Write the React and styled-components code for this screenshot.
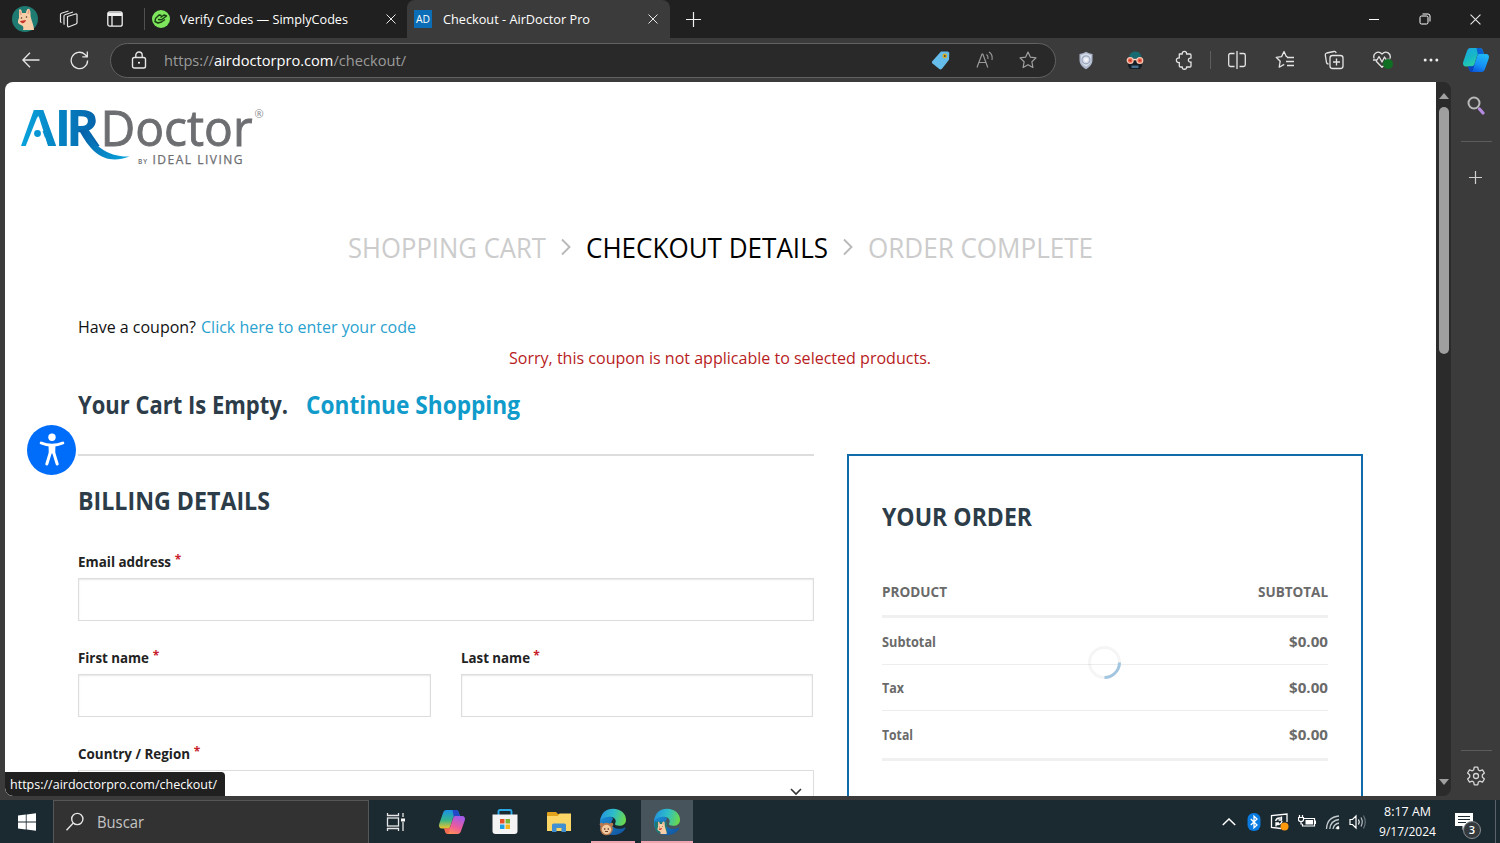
import React, { useLayoutEffect, useRef, useState } from "react";
import styled, { createGlobalStyle } from "styled-components";

const Fit = ({ w, children }) => {
  const ref = useRef(null);
  const [scale, setScale] = useState(1);

  useLayoutEffect(() => {
    setScale(w / ref.current.getBoundingClientRect().width);
  }, [w]);

  return (
    <FitBox $w={w}>
      <FitInner ref={ref} style={{ transform: `scaleX(${scale})` }}>
        {children}
      </FitInner>
    </FitBox>
  );
};

const CloseIcon = ({ size = 10 }) => (
  <Svg width={size} height={size} viewBox="0 0 10 10" stroke="#e8e8e8">
    <path d="M.5 .5l9 9M9.5 .5l-9 9" />
  </Svg>
);

const SearchGlass = () => (
  <Svg width="20" height="20" viewBox="0 0 20 20" stroke="#e6e6e6" strokeWidth="1.4">
    <circle cx="12.3" cy="7" r="5.6" />
    <path d="M8.3 11L1.5 18.3" />
  </Svg>
);

const CopilotIcon = ({ colorful }) => {
  const id = colorful ? "task" : "bar";
  return (
    <Svg width="28" height="26" viewBox="0 0 28 26">
      <defs>
        <linearGradient id={`${id}a`} x1="0" y1="0" x2={colorful ? "0" : ".6"} y2="1">
          <stop offset="0" stopColor={colorful ? "#1a8fe8" : "#1aa3e8"} />
          <stop offset=".55" stopColor={colorful ? "#35b58b" : "#16b9c4"} />
          <stop offset="1" stopColor={colorful ? "#f2c52c" : "#30d59a"} />
        </linearGradient>
        <linearGradient id={`${id}b`} x1=".6" y1="0" x2=".2" y2="1">
          <stop offset="0" stopColor={colorful ? "#a45be8" : "#1fb6f5"} />
          <stop offset=".55" stopColor={colorful ? "#ee5b9a" : "#1590f5"} />
          <stop offset="1" stopColor={colorful ? "#ff9652" : "#0a55d8"} />
        </linearGradient>
      </defs>
      <path d="M8.500 1h9c2 0 3 1.200 3.500 3l.8 3h-4c-2 0-2.500 1-3 2.500L12.500 17c-.7 2-1.700 2.500-3.500 2.500H4C1.500 19.500.5 17.500 1.200 15L5 4c.6-2 1.700-3 3.500-3z" fill={`url(#${id}a)`} />
      <path d="M14.500 1h3c2 0 3 1.200 3.500 3l.8 3h-4q-1.200 0-2 .8z" fill={colorful ? "#2148c7" : "#0a5fd2"} />
      <path d="M19.500 25h-9c-2 0-3-1.200-3.500-3l-.8-2.500H9c2 0 3-.7 3.500-2.500L15 9.500c.6-2 1.500-2.500 3.500-2.500H24c2.500 0 3.500 1.800 2.800 4.300L23 22c-.6 2-1.700 3-3.500 3z" fill={`url(#${id}b)`} />
      <path d="M6.200 19.500H9c2 0 3-.7 3.500-2.500l-1.500 6-.8 2c-2 0-2.700-1.200-3.200-3z" fill={colorful ? "#f26a4f" : "#0b46bd"} />
    </Svg>
  );
};

const LlamaShape = () => (
  <>
    <path d="M7 4c1-2 3 0 3 3l4 0c0-3 2.500-6 4-3 1 3 0 5 1 8 1 4 3 8 3 12H11c1-3 0-4-2-5-3-1-4-3-2-7z" fill="#f6cfa8" />
    <path d="M8 5l1 4M17 4l-1 4" stroke="#e8a08c" strokeWidth="1.500" />
    <path d="M8 15c1 3 5 3 6-1z" fill="#c7342c" />
    <circle cx="9.500" cy="12" r=".8" fill="#5a3020" />
    <circle cx="14.500" cy="11" r=".8" fill="#5a3020" />
  </>
);

const AvatarIcon = () => (
  <Svg width="26" height="26" viewBox="0 0 26 26">
    <circle cx="13" cy="13" r="13" fill="#1f7a72" />
    <LlamaShape />
  </Svg>
);

const EdgeIcon = ({ llama }) => {
  const id = llama ? "edgeL" : "edgeM";
  return (
    <Svg width="28" height="28" viewBox="0 0 28 28">
      <defs>
        <linearGradient id={`${id}a`} x1="0" y1=".3" x2="1" y2=".5">
          <stop offset="0" stopColor="#2493df" />
          <stop offset=".5" stopColor="#2dbdc8" />
          <stop offset="1" stopColor="#6ad94c" />
        </linearGradient>
        <linearGradient id={`${id}b`} x1="0" y1="0" x2="1" y2="1">
          <stop offset="0" stopColor="#1b8ed8" />
          <stop offset="1" stopColor="#12509a" />
        </linearGradient>
      </defs>
      <path d="M1 13c-1 8 4 14 13 14 6 0 10-2.500 12.300-6.500.4-.8-.3-1.200-1-.8-6 2.800-12.800.3-13-4.700 0-2.500 2-4 2-4C11 6 2 7 1 13z" fill={`url(#${id}b)`} />
      <path d="M1 13C2 5 7 .8 14 .8c8 0 13 5.200 13 11 0 4-3 6-6.500 6-3 0-5-1-4.500-2 2-3 0-7-5-7-4 0-8 1-10 4.200z" fill={`url(#${id}a)`} />
      {llama ? (
        <g transform="translate(1 12) scale(.58)">
          <path d="M1 3h21v20H10C4 22 1 16 1 3z" fill="#1f7a72" />
          <LlamaShape />
        </g>
      ) : (
        <>
          <circle cx="7.500" cy="21" r="6.300" fill="#b9794f" />
          <circle cx="7.500" cy="21.500" r="4.700" fill="#f3c9a0" />
          <circle cx="2.500" cy="16.500" r="1.800" fill="#b9794f" />
          <circle cx="12.500" cy="16.500" r="1.800" fill="#b9794f" />
          <circle cx="5.700" cy="21" r=".8" fill="#4a2a1c" />
          <circle cx="9.300" cy="21" r=".8" fill="#4a2a1c" />
          <path d="M6 23.500h3" stroke="#6b3c28" />
        </>
      )}
    </Svg>
  );
};

const Logo = () => (
  <LogoSvg width="246" height="62" viewBox="0 0 246 62">
    <defs>
      <linearGradient id="air" gradientUnits="userSpaceOnUse" x1="0" y1="0" x2="80" y2="0">
        <stop offset="0" stopColor="#08a3dc" />
        <stop offset="1" stopColor="#0560a8" />
      </linearGradient>
      <linearGradient id="swoosh" gradientUnits="userSpaceOnUse" x1="60" y1="26" x2="110" y2="50">
        <stop offset="0" stopColor="#0560a8" />
        <stop offset="1" stopColor="#08a8df" />
      </linearGradient>
    </defs>
    <text x="0 33.500 45" y="38.700" fontFamily="Open Sans" fontWeight="700" fontSize="51" fill="url(#air)">
      AIR
    </text>
    <path d="M4.500 39.500L16.500 9.500l10.500 30z" fill="#fff" />
    <circle cx="16.500" cy="26.500" r="3.400" fill="#0897d4" />
    <path d="M58 23h8c7 15 19 27 42.500 26.500C86 58 71 48 58 23z" fill="url(#swoosh)" />
    <text x="79.500" y="38.500" fontFamily="Open Sans" fontSize="50" fill="#6d6e71" stroke="#6d6e71" strokeWidth=".9" textLength="152" lengthAdjust="spacingAndGlyphs">
      Doctor
    </text>
    <text x="233.500" y="11" fontFamily="Open Sans" fontSize="11" fill="#8a8b8d">
      ®
    </text>
    <text x="117" y="56.500" fontFamily="Open Sans" fontWeight="600" fontSize="6.500" fill="#6d6e71" textLength="9">
      BY
    </text>
    <text x="131.500" y="56.500" fontFamily="Open Sans" fontSize="12" fill="#6d6e71" stroke="#6d6e71" strokeWidth=".25" textLength="90">
      IDEAL LIVING
    </text>
  </LogoSvg>
);

const TabStrip = () => (
  <TabBar>
    <TabBarTools>
      <AvatarIcon />
      <Svg width="20" height="18" viewBox="0 0 20 18" stroke="#e6e6e6" strokeWidth="1.200">
        <path d="M8.500 6.500l8-2.500q1.500-.3 1.500 1v7.500q0 1-1 1.500l-7 2.700q-1.500.4-1.500-1z" />
        <path d="M5.500 14.500L5 14V6q0-1 1-1.300L14 2M2.500 12.500L1.500 12V4.500q0-1 1-1.300L9.500 1" />
      </Svg>
      <Svg width="16" height="16" viewBox="0 0 16 16" stroke="#f0f0f0" strokeWidth="1.300">
        <rect x=".8" y=".8" width="14.400" height="14.400" rx="2" />
        <path d="M1 2.500h14M1 4h14" strokeWidth="2" />
        <path d="M5 4v11" />
      </Svg>
    </TabBarTools>
    <TabSeparator />
    <Tab $width={261}>
      <Svg width="18" height="18" viewBox="0 0 18 18">
        <circle cx="9" cy="9" r="9" fill="#7ee65c" />
        <path d="M9.500 5.500L7 5 3.500 8.500l-.5 3L6 13l3.500-1 3.500-2.500M6 9.500l3.500.3L14.500 6 12 5l-3.500 2.500" stroke="#173c12" strokeWidth="1.400" strokeLinejoin="round" />
      </Svg>
      <TabTitle><Fit w={168}>Verify Codes — SimplyCodes</Fit></TabTitle>
      <CloseIcon />
    </Tab>
    <Tab $width={263} $active>
      <SiteMark><Fit w={14}>AD</Fit></SiteMark>
      <TabTitle><Fit w={147}>Checkout - AirDoctor Pro</Fit></TabTitle>
      <CloseIcon />
    </Tab>
    <NewTab>
      <Svg width="15" height="15" viewBox="0 0 15 15" stroke="#f0f0f0" strokeWidth="1.200">
        <path d="M7.500 0v15M0 7.500h15" />
      </Svg>
    </NewTab>
    <WindowControls>
      <Svg width="10" height="10" viewBox="0 0 10 10" stroke="#fff"><path d="M0 5.500h10" /></Svg>
      <Svg width="12" height="12" viewBox="0 0 12 12" stroke="#fff">
        <rect x="1" y="3" width="8" height="8" rx="1.500" />
        <path d="M3.500 1H9q2 0 2 2v5.500" />
      </Svg>
      <CloseIcon size={11} />
    </WindowControls>
  </TabBar>
);

const Toolbar = () => (
  <ToolbarRow>
    <NavButtons>
      <Svg width="18" height="16" viewBox="0 0 18 16" stroke="#e6e6e6" strokeWidth="1.300">
        <path d="M17.500 8H1M8 .8L.9 8 8 15.200" />
      </Svg>
      <Svg width="19" height="19" viewBox="0 0 19 19" stroke="#e6e6e6" strokeWidth="1.300">
        <path d="M17.600 9.500a8.200 8.200 0 1 1-2.600-6L17 5.500M17.300.6v5.200h-5" />
      </Svg>
    </NavButtons>
    <AddressBar>
      <Svg width="16" height="18" viewBox="0 0 16 18" stroke="#e6e6e6" strokeWidth="1.400">
        <rect x="1.500" y="6.500" width="13" height="10.500" rx="1.800" />
        <path d="M4.800 6.500V4.200a3.200 3.200 0 0 1 6.400 0v2.300" />
        <circle cx="8" cy="11.800" r="1" fill="#fff" stroke="none" />
      </Svg>
      <Url>
        <Fit w={242}>https://<b>airdoctorpro.com</b>/checkout/</Fit>
      </Url>
      <AddressIcons>
        <Svg width="20" height="19" viewBox="0 0 20 19">
          <path d="M10 .6h7l1.300 1.200-.3 7L11 17.800q-1.500 1.200-3 0L1.500 12.500Q.5 11.500 1.300 10.300z" fill="#64bdea" />
          <circle cx="13.800" cy="5" r="2.400" fill="#dcae28" />
          <circle cx="13.800" cy="5" r="1" fill="#3a4a52" />
        </Svg>
        <Svg width="18" height="18" viewBox="0 0 18 18" stroke="#999" strokeWidth="1.200">
          <path d="M1 16.500L6 3h.8l5 13.500M3 11.500h7M10.500 3.500q2 1.500 1.500 4.500M13 1q4 2.500 3 8" />
        </Svg>
        <Svg width="18" height="18" viewBox="0 0 18 18" stroke="#a0a0a0" strokeWidth="1.200">
          <path d="M9 1l2.400 5.200 5.600.7-4.100 3.900 1 5.700L9 13.700l-4.900 2.800 1-5.700L1 6.900l5.600-.7z" strokeLinejoin="round" />
        </Svg>
      </AddressIcons>
    </AddressBar>
    <Extensions>
      <Svg width="18" height="19" viewBox="0 0 18 19">
        <path d="M9 .8Q12 2.500 15.500 3v6c0 4-3 7.500-6.500 9.200C5.500 16.500 2.500 13 2.500 9V3Q6 2.500 9 .8z" fill="#aeb8cc" />
        <path d="M9 2.500l5 1.800V9c0 3-2 5-5 6.700C6 14 4 12 4 9V4.300z" fill="#d8deea" />
        <circle cx="9" cy="8.800" r="4" stroke="#9aa5bb" strokeWidth="1.200" />
        <circle cx="9" cy="8.800" r="2" fill="#f2f4fa" />
      </Svg>
      <Svg width="18" height="18" viewBox="0 0 18 18">
        <path d="M3 7.500C3 3 5.500.5 9.500.5S15.500 3.500 15.500 7.500z" fill="#176b70" />
        <path d="M2 10h14v5l-2 3H4l-2-3z" fill="#151d25" />
        <path d="M5.500 14.500h7v2.500h-7z" fill="#456f8e" />
        <path d="M7 8.500h4" stroke="#f0d8cc" strokeWidth="1.400" />
        <circle cx="4.200" cy="9.500" r="2.900" fill="#ea5a40" stroke="#f5c5b4" strokeWidth="1.300" />
        <circle cx="13.800" cy="9.500" r="2.900" fill="#ea5a40" stroke="#f5c5b4" strokeWidth="1.300" />
        <circle cx="4.200" cy="9.500" r=".8" fill="#a32c20" />
        <circle cx="13.800" cy="9.500" r=".8" fill="#a32c20" />
      </Svg>
      <Svg width="18" height="20" viewBox="0 0 18 20" stroke="#e4e4e4" strokeWidth="1.300" strokeLinejoin="round">
        <path d="M4.300 4h3c-.8-3.600 5-3.600 4.200 0H15q1 0 1 1v3.200c-3.500-.8-3.500 4.600 0 3.800V16q0 1-1 1h-3.500c.8 3-5 3-4.200 0H5.300q-1 0-1-1v-3.500C.4 13 .4 7.500 4.300 8z" />
      </Svg>
    </Extensions>
    <ToolDivider />
    <ToolIcons>
      <Svg width="20" height="20" viewBox="0 0 20 20" stroke="#e4e4e4" strokeWidth="1.300">
        <path d="M7.500 3.500h-4q-1.800 0-1.800 1.800v9.400q0 1.800 1.800 1.800h4M12.500 3.500h4q1.800 0 1.800 1.800v9.400q0 1.800-1.800 1.800h-4M10 1v18" />
      </Svg>
      <Svg width="20" height="20" viewBox="0 0 20 20" stroke="#e4e4e4" strokeWidth="1.300">
        <path d="M12.500 6.700L11.300 6.500 9 1.500 6.600 6.600 1.200 7.300l4 3.900-1 6 5-2.800M12 7.500h7M11 11.500h8M12 15.500h7" strokeLinejoin="round" />
      </Svg>
      <Svg width="20" height="20" viewBox="0 0 20 20" stroke="#e4e4e4" strokeWidth="1.300">
        <path d="M4.500 14Q2.800 14 2.500 12.500L1.300 5.200Q1 3.500 2.700 3l7.200-1.500q1.700-.3 2.300 1.500" />
        <rect x="6" y="5.500" width="13" height="13" rx="2.500" />
        <path d="M12.500 8.500v7M9 12h7" />
      </Svg>
      <Svg width="22" height="20" viewBox="0 0 22 20" stroke="#e4e4e4" strokeWidth="1.300">
        <path d="M2.200 8.500C.3 4 5.800-.3 10 4c4.200-4.300 9.500-.2 8 4.500M4 11l6 6.300 1.500-1.500M1 10h4l2-3.500L10 12l2.500-5 1.500 2.500h4" strokeLinejoin="round" />
        <circle cx="16" cy="14" r="5" fill="#0f7024" stroke="none" />
      </Svg>
      <Svg width="16" height="4" viewBox="0 0 16 4">
        <circle cx="2.200" cy="2" r="1.500" fill="#eee" />
        <circle cx="8" cy="2" r="1.500" fill="#eee" />
        <circle cx="13.800" cy="2" r="1.500" fill="#eee" />
      </Svg>
    </ToolIcons>
    <CopilotSlot><CopilotIcon /></CopilotSlot>
  </ToolbarRow>
);

const Field = ({ label, labelWidth }) => (
  <FieldBox>
    <Label><Fit w={labelWidth}>{label}</Fit> <i>*</i></Label>
    <Input />
  </FieldBox>
);

const totals = [
  { label: "Subtotal", w: 54 },
  { label: "Tax", w: 22 },
  { label: "Total", w: 31 },
];

const Crumb = () => (
  <Svg width="12" height="18" viewBox="0 0 12 18" stroke="#b9b9b9" strokeWidth="1.900">
    <path d="M2 1.500L9.500 9 2 16.500" />
  </Svg>
);

const CheckoutPage = () => (
  <Page>
    <PageHeader><Logo /></PageHeader>
    <Steps>
      <Step><Fit w={198}>SHOPPING CART</Fit></Step>
      <Crumb />
      <Step $current><Fit w={242}>CHECKOUT DETAILS</Fit></Step>
      <Crumb />
      <Step><Fit w={225}>ORDER COMPLETE</Fit></Step>
    </Steps>
    <Coupon>
      <Fit w={118}>Have a coupon?</Fit>
      <a><Fit w={215}>Click here to enter your code</Fit></a>
    </Coupon>
    <CouponError><Fit w={422}>Sorry, this coupon is not applicable to selected products.</Fit></CouponError>
    <EmptyCart>
      <Fit w={210}>Your Cart Is Empty.</Fit>
      <a><Fit w={214}>Continue Shopping</Fit></a>
    </EmptyCart>
    <Columns>
      <Billing>
        <BillingTitle><Fit w={192}>BILLING DETAILS</Fit></BillingTitle>
        <Field label="Email address" labelWidth={93} />
        <FieldRow>
          <Field label="First name" labelWidth={71} />
          <Field label="Last name" labelWidth={69} />
        </FieldRow>
        <FieldBox>
          <Label><Fit w={112}>Country / Region</Fit> <i>*</i></Label>
          <Select>
            <Svg width="12" height="8" viewBox="0 0 12 8" stroke="#333" strokeWidth="1.600">
              <path d="M1 1l5 5 5-5" />
            </Svg>
          </Select>
        </FieldBox>
      </Billing>
      <Order>
        <OrderTitle><Fit w={150}>YOUR ORDER</Fit></OrderTitle>
        <OrderHead><Fit w={65}>PRODUCT</Fit><Fit w={70}>SUBTOTAL</Fit></OrderHead>
        {totals.map((row) => (
          <OrderRow key={row.label}>
            <Fit w={row.w}>{row.label}</Fit>
            <Fit w={39}>$0.00</Fit>
          </OrderRow>
        ))}
        <Spinner />
      </Order>
    </Columns>
    <AccessButton>
      <Svg width="28" height="34" viewBox="0 0 28 34">
        <circle cx="14" cy="4.200" r="3.700" fill="#fff" />
        <path d="M3.200 10q5 2.200 10.800 2.200T24.800 10M12.200 20l-3.400 11M15.800 20l3.400 11" stroke="#fff" strokeWidth="3" strokeLinecap="round" />
        <path d="M10.500 11h7l-.3 9.500h-6.400z" fill="#fff" />
      </Svg>
    </AccessButton>
    <StatusUrl><Fit w={207}>https://airdoctorpro.com/checkout/</Fit></StatusUrl>
  </Page>
);

const Sidebar = () => (
  <Side>
    <Svg width="18" height="19" viewBox="0 0 18 19">
      <circle cx="7" cy="7" r="5.500" stroke="#b9b9b9" strokeWidth="2" />
      <path d="M12.500 13l3.500 4" stroke="#b58be0" strokeWidth="3.200" strokeLinecap="round" />
    </Svg>
    <SideRule />
    <Svg width="13" height="13" viewBox="0 0 13 13" stroke="#d0d0d0" strokeWidth="1.200"><path d="M6.500 0v13M0 6.500h13" /></Svg>
    <SideSpace />
    <SideRule />
    <Svg width="20" height="20" viewBox="0 0 20 20" stroke="#d6d6d6" strokeWidth="1.300" strokeLinejoin="round">
      <path d="M8.300 1.200h3.400l.7 2.800 1.300.8 2.800-.9 1.900 3.100-2.100 2v2l2.100 2-1.900 3.100-2.800-.9-1.300.8-.7 2.800H8.300L7.600 16l-1.300-.8-2.800.9L1.600 13l2.100-2V9L1.600 7l1.900-3.100 2.800.9L7.600 4z" />
      <circle cx="10" cy="10" r="2.500" />
    </Svg>
  </Side>
);

const Taskbar = () => (
  <TaskRow>
    <StartButton>
      <Svg width="18" height="18" viewBox="0 0 18 18">
        <path d="M0 2.600l7.800-1v7H0zM8.600 1.400L18 .2v8.400H8.600zM0 9.400h7.800v7L0 15.400zM8.600 9.400H18v8.400l-9.400-1.200z" fill="#fff" />
      </Svg>
    </StartButton>
    <SearchBox>
      <SearchGlass />
      <Fit w={47}>Buscar</Fit>
    </SearchBox>
    <TaskItem>
      <Svg width="20" height="18" viewBox="0 0 20 18" stroke="#e6e6e6" strokeWidth="1.300">
        <path d="M1.500 0v2.500h11V0M1.500 18v-2.500h11V18M17 0v4M17 9v9" />
        <rect x="1.500" y="5" width="11" height="8" />
        <path d="M15 5.500h4v3h-4z" fill="#fff" stroke="none" />
      </Svg>
    </TaskItem>
    <TaskItem $nudge={3}><CopilotIcon colorful /></TaskItem>
    <TaskItem $nudge={2}>
      <Svg width="26" height="26" viewBox="0 0 26 26">
        <path d="M6.500 6V2.500q0-1.500 1.500-1.500h10q1.500 0 1.500 1.500V6" stroke="#2ba8e6" strokeWidth="1.900" />
        <path d="M.5 5.500h25V22q0 3-3 3h-19q-3 0-3-3z" fill="#f4f4f4" />
        <path d="M8 10h4.500v4.500H8z" fill="#e8502c" />
        <path d="M13.500 10H18v4.500h-4.500z" fill="#7fb432" />
        <path d="M8 15.500h4.500V20H8z" fill="#1f9fe3" />
        <path d="M13.500 15.500H18V20h-4.500z" fill="#f5b51c" />
      </Svg>
    </TaskItem>
    <TaskItem>
      <Svg width="24" height="20" viewBox="0 0 24 20">
        <path d="M0 1q0-1 1-1h8l2 2h12q1 0 1 1v16H0z" fill="#e3a21b" />
        <path d="M0 4h11l1.500-2.500H24V19H0z" fill="#fbd667" />
        <path d="M5 20v-7q0-1.500 1.500-1.500h11q1.500 0 1.500 1.500v7h-4.500v-4h-5v4z" fill="#3f8fd2" />
      </Svg>
    </TaskItem>
    <TaskItem $open><EdgeIcon /></TaskItem>
    <TaskItem $open $active><EdgeIcon llama /></TaskItem>
    <Tray>
      <Svg width="14" height="8" viewBox="0 0 14 8" stroke="#fff" strokeWidth="1.500"><path d="M.8 7L7 1l6.200 6" /></Svg>
      <Svg width="14" height="18" viewBox="0 0 14 18">
        <rect x=".5" width="13" height="18" rx="6" fill="#0a7be0" />
        <path d="M3.800 6l6.200 6-3 2.800V3.200L10 6l-6.200 6" stroke="#fff" strokeWidth="1.300" />
      </Svg>
      <Svg width="20" height="18" viewBox="0 0 20 18" stroke="#fff" strokeWidth="1.300">
        <path d="M17 9V1L1.500 2.500v12L11 15.500M5.500 8q1-3 4-3h2M11.500 3.500V7h-3M12 8q-.5 3-3.500 3.500h-2M6 13.500V10h3" />
        <circle cx="14.500" cy="13.500" r="4" fill="#ff9a0d" stroke="none" />
      </Svg>
      <Svg width="18" height="14" viewBox="0 0 18 14" stroke="#fff" strokeWidth="1.200">
        <path d="M6 3.500h10.500v7.500H4.500V9M17.500 5.500v3.500M1.500 0v2.500M4.500 0v2.500M.5 2.500h5v2Q5.500 6.500 3 6.500T.5 4.500zM3 6.500V9h1.500" />
        <path d="M7.500 5h7.500v4.500H7.500z" fill="#fff" stroke="none" />
      </Svg>
      <Svg width="16" height="16" viewBox="0 0 16 16" stroke="#c3cacd" strokeWidth="1.300">
        <path d="M1.500 15Q2 3 14 2M4.800 15Q5.500 6.500 14 5.500M8 15q.8-5 6-6M11 15q.5-2 3-3" />
        <circle cx="13" cy="14" r="1.400" fill="#fff" stroke="none" />
      </Svg>
      <Svg width="18" height="16" viewBox="0 0 18 16" stroke="#fff" strokeWidth="1.200">
        <path d="M1 5.500h2.500L7 2v12l-3.500-3.500H1zM9.500 5.500q1.500 2.500 0 5" />
        <path d="M12 3.500q2.500 4.500 0 9" stroke="#bcc2c5" />
        <path d="M14.500 1.500q3.500 6.500 0 13" stroke="#66737a" />
      </Svg>
    </Tray>
    <Clock>
      <Fit w={47}>8:17 AM</Fit>
      <Fit w={57}>9/17/2024</Fit>
    </Clock>
    <Notifications>
      <Svg width="18" height="18" viewBox="0 0 18 18">
        <path d="M0 0h18v13h-7l-3.500 4v-4H0z" fill="#fff" />
        <path d="M3 3.500h12M3 6.500h12M3 9.500h8" stroke="#1c2a32" strokeWidth="1.100" />
      </Svg>
      <Badge>3</Badge>
    </Notifications>
    <DesktopEdge />
  </TaskRow>
);

const App = () => (
  <Screen>
    <GlobalStyle />
    <TabStrip />
    <Toolbar />
    <Middle>
      <CheckoutPage />
      <Scrollbar>
        <Svg width="10" height="6" viewBox="0 0 10 6"><path d="M5 0l5 6H0z" fill="#a0a0a0" /></Svg>
        <Thumb />
        <Svg width="10" height="6" viewBox="0 0 10 6"><path d="M5 6L0 0h10z" fill="#a0a0a0" /></Svg>
      </Scrollbar>
      <Sidebar />
    </Middle>
    <Taskbar />
  </Screen>
);

export default App;

const GlobalStyle = createGlobalStyle`
  * {
    box-sizing: border-box;
  }
  body {
    margin: 0;
    overflow: hidden;
    font-family: "Open Sans", "Noto Sans", sans-serif;
  }
`;

const Screen = styled.div`
  display: flex;
  flex-direction: column;
  width: 1500px;
  height: 843px;
  background-color: #3b3b3b;
  overflow: hidden;
`;

const Svg = styled.svg`
  display: block;
  flex: none;
  fill: none;
`;

const FitBox = styled.span`
  display: inline-block;
  flex: none;
  width: ${(props) => props.$w}px;
  white-space: nowrap;
  vertical-align: top;
`;
const FitInner = styled.span`
  display: inline-block;
  transform-origin: left;
`;

const TabBar = styled.div`
  display: flex;
  align-items: center;
  height: 38px;
  background-color: #202020;
`;
const TabBarTools = styled.div`
  display: flex;
  align-items: center;
  width: 144px;
  padding-left: 12px;

  svg:nth-child(2) {
    margin: 0 28px 0 21px;
  }
`;
const TabSeparator = styled.div`
  width: 1px;
  height: 22px;
  margin-right: 1px;
  background-color: #505050;
`;
const Tab = styled.div`
  display: flex;
  align-items: center;
  width: ${(props) => props.$width}px;
  height: 38px;
  padding: 0 ${(props) => (props.$active ? 12 : 11)}px 0 ${(props) => (props.$active ? 7 : 6)}px;
  border-radius: 8px 8px 0 0;
  background-color: ${(props) => (props.$active ? "#3b3b3b" : "transparent")};
`;
const TabTitle = styled.div`
  flex: 1;
  margin-left: 10px;
  padding-top: 1px;
  font-size: 12.5px;
  line-height: 18px;
  color: #fff;
`;
const SiteMark = styled.div`
  width: 18px;
  height: 18px;
  padding-left: 2px;
  margin-right: 1px;
  font-size: 10px;
  line-height: 18px;
  color: #fff;
  background-color: #0b6db5;
`;
const NewTab = styled.div`
  margin-left: 16px;
`;
const WindowControls = styled.div`
  display: flex;
  align-items: center;
  justify-content: space-between;
  width: 112px;
  margin-left: auto;
  margin-right: 19px;
`;

const ToolbarRow = styled.div`
  display: flex;
  align-items: center;
  height: 44px;
  background-color: #3b3b3b;
`;
const NavButtons = styled.div`
  display: flex;
  align-items: center;
  gap: 30px;
  width: 110px;
  padding-left: 22px;
`;
const AddressBar = styled.div`
  display: flex;
  align-items: center;
  width: 946px;
  height: 35px;
  padding: 0 18px 0 20px;
  border: 1px solid #626262;
  border-radius: 18px;
  background-color: #292929;
`;
const Url = styled.div`
  margin-left: 17px;
  font-size: 15px;
  line-height: 20px;
  color: #9b9b9b;

  b {
    font-weight: 400;
    color: #fff;
  }
`;
const AddressIcons = styled.div`
  display: flex;
  align-items: center;
  gap: 25px;
  margin-left: auto;
`;
const Extensions = styled.div`
  display: flex;
  align-items: center;
  gap: 31px;
  margin-left: 21px;
`;
const ToolDivider = styled.div`
  width: 1px;
  height: 18px;
  margin: 0 16px 0 17px;
  background-color: #5e5e5e;
`;
const ToolIcons = styled.div`
  display: flex;
  align-items: center;
  gap: 28.4px;
`;
const CopilotSlot = styled.div`
  margin-left: auto;
  margin-right: 10px;
`;

const Middle = styled.div`
  display: flex;
  height: 718px;
  padding: 0 0 4px 5px;
`;
const Page = styled.main`
  position: relative;
  display: flex;
  flex-direction: column;
  width: 1431px;
  height: 714px;
  border-radius: 8px 0 0 8px;
  background-color: #fff;
  overflow: hidden;
`;
const PageHeader = styled.header`
  flex: none;
  height: 141px;
  padding: 25px 0 0 16px;
`;
const LogoSvg = styled(Svg)`
  overflow: visible;
`;
const Steps = styled.nav`
  display: flex;
  flex: none;
  align-items: center;
  justify-content: center;
  height: 48px;
  gap: 14px;
`;
const Step = styled.div`
  font-size: 28px;
  line-height: 40px;
  color: ${(props) => (props.$current ? "#000" : "#ccc")};
`;
const Coupon = styled.div`
  display: flex;
  gap: 5px;
  margin-top: 44px;
  padding-left: 73px;
  font-size: 16px;
  line-height: 24px;
  color: #111;

  a {
    color: #2aa2cf;
  }
`;
const CouponError = styled.div`
  margin-top: 7px;
  padding-right: 2px;
  text-align: center;
  font-size: 16px;
  line-height: 24px;
  color: #b81c23;
`;
const EmptyCart = styled.div`
  display: flex;
  gap: 18px;
  margin-top: 16px;
  padding-left: 73px;
  font-size: 25px;
  font-weight: 700;
  line-height: 36px;
  color: #2c3c48;

  a {
    color: #109bcb;
  }
`;
const Columns = styled.div`
  display: flex;
  flex: none;
  gap: 33px;
  margin-top: 32px;
  padding-left: 73px;
`;
const Billing = styled.section`
  width: 736px;
  border-top: 2px solid #ddd;
`;
const BillingTitle = styled.h3`
  margin: 26px 0 34px;
  font-size: 25px;
  font-weight: 700;
  line-height: 36px;
  color: #2c3c48;
`;
const OrderTitle = styled(BillingTitle)`
  margin: 42px 0 0;
`;
const FieldBox = styled.div`
  flex: 1;
  margin-bottom: 27px;
`;
const FieldRow = styled.div`
  display: flex;
  gap: 30px;
  padding-right: 1px;
`;
const Label = styled.label`
  display: block;
  height: 26px;
  font-size: 14.5px;
  font-weight: 700;
  line-height: 20px;
  color: #222;

  i {
    font-style: normal;
    font-size: 12px;
    line-height: 16px;
    vertical-align: top;
    color: #c8202a;
  }
`;
const Input = styled.input`
  display: block;
  width: 100%;
  height: 43px;
  border: 1px solid #ddd;
  box-shadow: inset 0 1px 2px rgba(0, 0, 0, 0.1);
  outline: none;
`;
const Select = styled.div`
  display: flex;
  align-items: center;
  justify-content: flex-end;
  height: 43px;
  padding-right: 11px;
  border: 1px solid #ddd;
`;
const Order = styled.section`
  position: relative;
  width: 516px;
  height: 400px;
  padding: 0 33px;
  border: 2px solid #0f6ba9;
`;
const OrderRow = styled.div`
  display: flex;
  justify-content: space-between;
  align-items: center;
  height: 46px;
  border-bottom: 1px solid #ededed;
  font-size: 14.5px;
  font-weight: 700;
  line-height: 20px;
  color: #6a6a6a;

  &:nth-child(5) {
    height: 50px;
    border-bottom: 3px solid #f0f0f0;
  }
`;
const OrderHead = styled(OrderRow)`
  height: 49px;
  margin: 35px 0 1px;
  border-bottom: 3px solid #f0f0f0;
`;
const Spinner = styled.div`
  position: absolute;
  left: 239px;
  top: 190px;
  width: 33px;
  height: 33px;
  border: 3px solid rgba(0, 0, 0, 0.04);
  border-radius: 50%;

  &::after {
    content: "";
    position: absolute;
    inset: -3px;
    border: 3px solid transparent;
    border-right-color: #a2c5e0;
    border-radius: 50%;
    transform: rotate(45deg);
  }
`;
const AccessButton = styled.button`
  position: absolute;
  left: 22px;
  top: 343px;
  display: flex;
  align-items: center;
  justify-content: center;
  width: 49px;
  height: 50px;
  padding: 0;
  border: none;
  border-radius: 50%;
  background-color: #006dfa;
`;
const StatusUrl = styled.div`
  position: absolute;
  left: 0;
  bottom: 0;
  width: 220px;
  height: 24px;
  padding-left: 5px;
  border-radius: 0 4px 0 8px;
  font-size: 12.5px;
  line-height: 25px;
  color: #fff;
  background-color: #202020;
`;

const Scrollbar = styled.div`
  display: flex;
  flex-direction: column;
  align-items: center;
  width: 15px;
  height: 714px;
  padding: 11px 0;
  border-radius: 0 8px 8px 0;
  background-color: #2b2b2b;

  svg:last-child {
    margin-top: auto;
  }
`;
const Thumb = styled.div`
  width: 10px;
  height: 247px;
  margin-top: 8px;
  border-radius: 5px;
  background-color: #9f9f9f;
`;
const Side = styled.aside`
  display: flex;
  flex-direction: column;
  align-items: center;
  width: 49px;
  padding: 14px 0 10px;
`;
const SideRule = styled.div`
  flex: none;
  width: 31px;
  height: 1px;
  margin: 26px 0 29px 2px;
  background-color: #5c5c5c;

  &:nth-child(5) {
    margin: 0 0 15px 2px;
  }
`;
const SideSpace = styled.div`
  flex: 1;
`;

const TaskRow = styled.footer`
  display: flex;
  align-items: center;
  height: 43px;
  background-color: #1b2931;
`;
const StartButton = styled.div`
  display: flex;
  justify-content: center;
  width: 53px;
`;
const SearchBox = styled.div`
  display: flex;
  align-items: center;
  gap: 12px;
  width: 316px;
  height: 43px;
  margin-right: 1px;
  padding-left: 11px;
  border: 1px solid #565656;
  border-bottom: none;
  font-size: 15.5px;
  color: #c4c4c4;
  background-color: #323232;
`;
const TaskItem = styled.div`
  display: flex;
  align-items: center;
  justify-content: center;
  width: 52px;
  height: 43px;
  margin-right: 2.2px;
  padding-left: ${(props) => props.$nudge || 0}px;
  background: ${(props) =>
    props.$open
      ? `linear-gradient(#f0a3b1, #f0a3b1) center bottom / ${props.$active ? 52 : 44}px 2px no-repeat`
      : "none"};
  background-color: ${(props) => (props.$active ? "#48545b" : "transparent")};
`;
const Tray = styled.div`
  display: flex;
  align-items: center;
  gap: 8.5px;
  margin-left: auto;

  svg:first-child {
    margin-right: 3px;
  }
`;
const Clock = styled.div`
  display: flex;
  flex-direction: column;
  align-items: center;
  width: 57px;
  margin-left: 12px;
  font-size: 12.5px;
  line-height: 20px;
  color: #fff;
`;
const Notifications = styled.div`
  position: relative;
  margin: 0 22px 0 19px;
`;
const Badge = styled.div`
  position: absolute;
  left: 8px;
  top: 8px;
  width: 18px;
  height: 18px;
  border: 1px solid #8a8f92;
  border-radius: 50%;
  text-align: center;
  font-size: 11px;
  font-weight: 600;
  line-height: 16px;
  color: #fff;
  background-color: #33393c;
`;
const DesktopEdge = styled.div`
  width: 1px;
  height: 43px;
  margin-right: 4px;
  background-color: #59646a;
`;
